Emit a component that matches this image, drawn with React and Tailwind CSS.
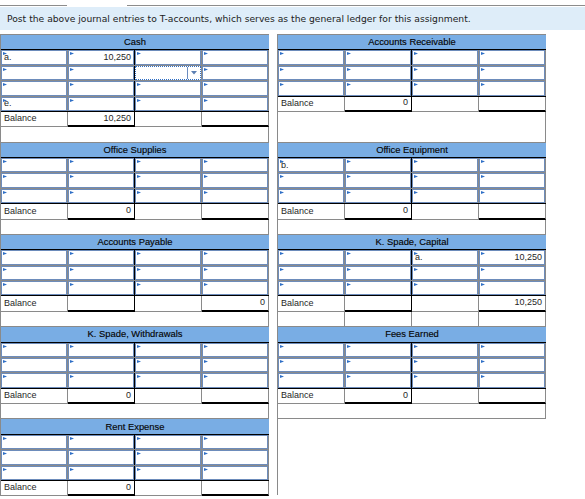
import React from "react";

const ROW = "h-[15.38px]";

function Flag() {
  return (
    <svg
      className="absolute left-[1px] top-[1px]"
      width="4"
      height="4"
      viewBox="0 0 4 4"
    >
      <polygon points="0,0 4,1.5 0,3" fill="#2f6fc6" />
    </svg>
  );
}

function Header({ title }) {
  return (
    <div
      className={`${ROW} flex items-center justify-center bg-[#79ade4] border-b border-black text-[9.4px] text-black [-webkit-text-stroke:0.15px_#111]`}
    >
      {title}
    </div>
  );
}

function InputCell({ text, right, mid, dropdown }) {
  const side = mid ? "border-r-black" : "border-r-[#8a8a8a]";
  if (dropdown) {
    return (
      <div className={`w-[67px] h-full border-r ${side}`}>
        <div className="flex h-full border border-dotted border-[#2f6fc6]">
          <div className="flex-1 border-r border-[#6b8cc0]" />
          <div className="w-[12px] flex items-center justify-center">
            <svg width="6" height="4" viewBox="0 0 6 4">
              <polygon points="0,0 6,0 3,3.5" fill="#5b7fb3" />
            </svg>
          </div>
        </div>
      </div>
    );
  }
  return (
    <div className={`w-[67px] h-full border-r ${side}`}>
      <div
        className={`relative h-full border border-[#6d8cbb] bg-white flex items-center px-[2px] ${
          right ? "justify-end" : ""
        }`}
      >
        <Flag />
        <span className="leading-none">{text}</span>
      </div>
    </div>
  );
}

function InputRow({ cells = ["", "", "", ""], last, drop }) {
  return (
    <div
      className={`${ROW} flex border-b ${
        last ? "border-b-black" : "border-b-[#8a8a8a]"
      }`}
    >
      {cells.map((c, i) => (
        <InputCell
          key={i}
          text={c}
          right={i % 2 === 1}
          mid={i === 1}
          dropdown={drop === i}
        />
      ))}
    </div>
  );
}

function BalanceRow({ vals }) {
  return (
    <div className={`${ROW} flex`}>
      <div className="w-[67px] h-full border-r border-b border-[#8a8a8a] flex items-center px-[3px]">
        Balance
      </div>
      <div className="w-[67px] h-full border-r border-r-black border-b-2 border-b-black flex items-center justify-end px-[3px]">
        {vals[0]}
      </div>
      <div className="w-[67px] h-full border-r border-b border-[#8a8a8a]" />
      <div className="w-[67px] h-full border-r border-r-[#8a8a8a] border-b-2 border-b-black flex items-center justify-end px-[3px]">
        {vals[2]}
      </div>
    </div>
  );
}

function Blank({ rows = 1, split }) {
  const h = rows === 2 ? "h-[30.76px]" : ROW;
  if (split) {
    return (
      <div className={`${h} flex border-b border-[#8a8a8a]`}>
        {[0, 1, 2, 3].map((i) => (
          <div key={i} className="w-[67px] h-full border-r border-[#8a8a8a]" />
        ))}
      </div>
    );
  }
  return <div className={`${h} border-r border-b border-[#8a8a8a]`} />;
}

function Account({ title, rows, balance, drop }) {
  return (
    <>
      <Header title={title} />
      {rows.map((r, i) => (
        <InputRow
          key={i}
          cells={r}
          last={i === rows.length - 1}
          drop={i === 1 ? drop : undefined}
        />
      ))}
      <BalanceRow vals={balance} />
    </>
  );
}

const E = ["", "", "", ""];

export default function App() {
  return (
    <div
      className="w-[585px] h-[499px] bg-white text-[9px] text-[#1f1f1f] overflow-hidden"
      style={{ fontFamily: '"Liberation Sans", Arial, sans-serif' }}
    >
      <div className="h-[5px]" />
      <div className="flex h-px">
        <div className="w-[67px] bg-[#8c8c8c]" />
        <div className="w-[60px]" />
        <div className="flex-1 bg-[#8c8c8c]" />
      </div>
      <div
        className="mt-px h-[23px] bg-[#deedf9] flex items-center pl-[7px] pt-[1px] text-[9.2px] text-[#222]"
        style={{ fontFamily: '"DejaVu Sans", Verdana, sans-serif' }}
      >
        Post the above journal entries to T-accounts, which serves as the
        general ledger for this assignment.
      </div>

      <div className="mt-[4px] flex items-start">
        <div className="w-[269px] border-l border-t border-[#8a8a8a]">
          <Account
            title="Cash"
            rows={[["a.", "10,250", "", ""], E, E, ["e.", "", "", ""]]}
            drop={2}
            balance={["10,250", "", ""]}
          />
          <Blank />
          <Account title="Office Supplies" rows={[E, E, E]} balance={["0", "", ""]} />
          <Blank />
          <Account title="Accounts Payable" rows={[E, E, E]} balance={["", "", "0"]} />
          <Blank />
          <Account title="K. Spade, Withdrawals" rows={[E, E, E]} balance={["0", "", ""]} />
          <Blank />
          <Account title="Rent Expense" rows={[E, E, E]} balance={["0", "", ""]} />
        </div>

        <div className="w-[8px]" />

        <div className="w-[269px] border-l border-t border-[#8a8a8a]">
          <Account title="Accounts Receivable" rows={[E, E, E]} balance={["0", "", ""]} />
          <Blank rows={2} />
          <Account
            title="Office Equipment"
            rows={[["b.", "", "", ""], E, E]}
            balance={["0", "", ""]}
          />
          <Blank />
          <Account
            title="K. Spade, Capital"
            rows={[["", "", "a.", "10,250"], E, E]}
            balance={["", "", "10,250"]}
          />
          <Blank split />
          <Account title="Fees Earned" rows={[E, E, E]} balance={["0", "", ""]} />
          <Blank />
          <div className="h-[76px]" />
        </div>
      </div>
    </div>
  );
}
